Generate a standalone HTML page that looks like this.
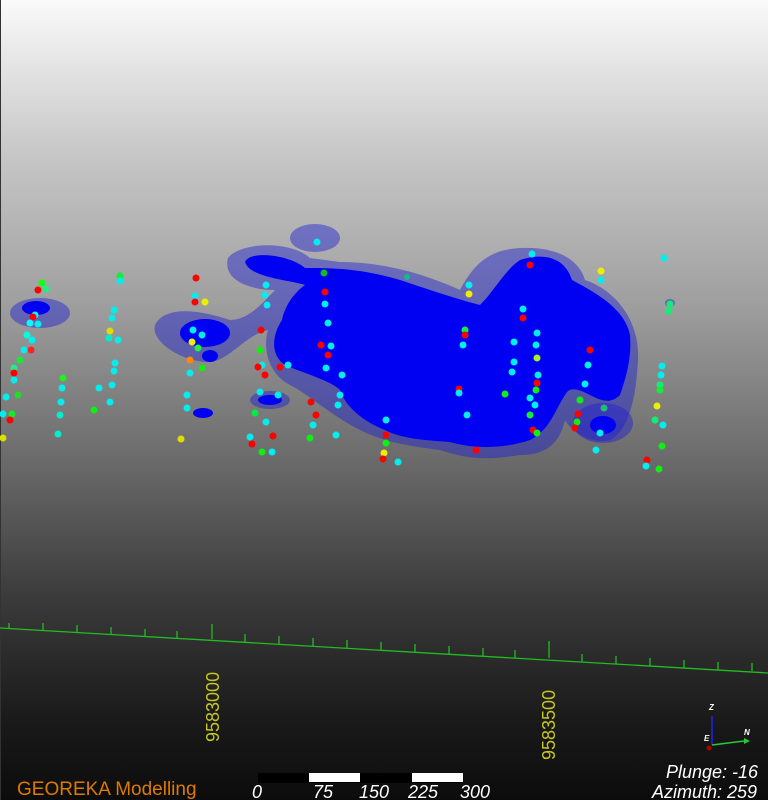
<!DOCTYPE html>
<html><head><meta charset="utf-8"><style>
html,body{margin:0;padding:0;width:768px;height:800px;overflow:hidden}
body{background:linear-gradient(#fafafa 0px,#c8c8c8 150px,#a0a0a0 300px,#6e6e6e 450px,#3a3a3a 600px,#1a1a1a 720px,#0c0c0c 800px);font-family:"Liberation Sans",sans-serif}
svg{position:absolute;left:0;top:0}
</style></head><body>
<svg width="768" height="800" viewBox="0 0 768 800">
<rect x="0" y="0" width="1" height="800" fill="#333"/>
<g fill="rgba(30,30,210,0.45)">
<ellipse cx="315" cy="238" rx="25" ry="14"/>
<path d="M228,258 C240,242 290,240 310,258 L340,262 C380,262 420,272 460,290 C475,262 490,250 520,248 C560,246 580,262 585,280 C615,290 640,320 638,360 C636,395 630,430 610,440 C590,445 570,430 565,420 C560,440 550,455 520,455 C490,460 470,460 440,450 C400,445 380,440 360,430 C330,415 310,395 290,385 C270,375 262,350 268,330 C245,335 230,360 210,362 C180,362 150,340 155,325 C165,305 200,310 230,320 C250,320 265,300 275,290 C250,290 222,280 228,258Z"/>
<ellipse cx="40" cy="313" rx="30" ry="15"/>
<ellipse cx="603" cy="423" rx="30" ry="20"/>
<ellipse cx="270" cy="400" rx="20" ry="9"/>
<ellipse cx="670" cy="303" rx="5" ry="4"/>
</g>
<g fill="#0000f2">
<path d="M245,262 C250,250 290,255 305,268 C330,268 360,268 400,280 C430,290 460,300 480,305 C495,290 505,270 520,260 C545,252 565,258 572,280 C600,295 625,310 630,335 C632,360 625,380 620,395 C610,405 600,400 590,395 C580,390 570,385 565,395 C555,410 550,430 530,440 C500,450 470,448 450,442 C420,440 400,438 385,430 C360,420 345,405 340,390 C330,380 300,372 285,365 C270,355 272,335 282,320 C285,305 295,292 305,285 C290,280 250,278 245,262Z"/>
<ellipse cx="205" cy="333" rx="25" ry="14"/>
<ellipse cx="36" cy="308" rx="14" ry="7"/>
<ellipse cx="603" cy="425" rx="13" ry="9"/>
<ellipse cx="203" cy="413" rx="10" ry="5"/>
<ellipse cx="210" cy="356" rx="8" ry="6"/>
<ellipse cx="270" cy="400" rx="12" ry="5"/>
</g>
<g>
<circle cx="42" cy="283" r="3.5" fill="#1f1"/><circle cx="38" cy="290" r="3.5" fill="#f00"/><circle cx="46" cy="289" r="3.5" fill="#2e8"/>
<circle cx="35" cy="315" r="3.5" fill="#0ff"/><circle cx="33" cy="317" r="3.5" fill="#f00"/><circle cx="30" cy="323" r="3.5" fill="#0ff"/>
<circle cx="38" cy="324" r="3.5" fill="#0ee"/><circle cx="27" cy="335" r="3.5" fill="#0fd"/><circle cx="32" cy="340" r="3.5" fill="#0ee"/>
<circle cx="24" cy="350" r="3.5" fill="#0ee"/><circle cx="31" cy="350" r="3.5" fill="#f22"/><circle cx="20" cy="360" r="3.5" fill="#1e3"/>
<circle cx="14" cy="368" r="3.5" fill="#2e8"/><circle cx="14" cy="373" r="3.5" fill="#f00"/><circle cx="14" cy="380" r="3.5" fill="#0ee"/>
<circle cx="18" cy="395" r="3.5" fill="#2d2"/><circle cx="6" cy="397" r="3.5" fill="#0ee"/><circle cx="3" cy="414" r="3.5" fill="#0ee"/>
<circle cx="12" cy="414" r="3.5" fill="#1e2"/><circle cx="10" cy="420" r="3.5" fill="#f00"/><circle cx="3" cy="438" r="3.5" fill="#dd0"/>
<circle cx="120" cy="276" r="3.5" fill="#1e3"/><circle cx="120" cy="281" r="3.5" fill="#0ee"/><circle cx="114" cy="310" r="3.5" fill="#0ee"/>
<circle cx="112" cy="318" r="3.5" fill="#0ee"/><circle cx="110" cy="331" r="3.5" fill="#dd0"/><circle cx="109" cy="338" r="3.5" fill="#0ec"/>
<circle cx="118" cy="340" r="3.5" fill="#0ee"/><circle cx="115" cy="363" r="3.5" fill="#0ee"/><circle cx="114" cy="371" r="3.5" fill="#0ee"/>
<circle cx="112" cy="385" r="3.5" fill="#0ee"/><circle cx="99" cy="388" r="3.5" fill="#0ee"/><circle cx="110" cy="402" r="3.5" fill="#0ee"/>
<circle cx="94" cy="410" r="3.5" fill="#1e1"/><circle cx="63" cy="378" r="3.5" fill="#2e2"/><circle cx="62" cy="388" r="3.5" fill="#0ee"/>
<circle cx="61" cy="402" r="3.5" fill="#0ee"/><circle cx="60" cy="415" r="3.5" fill="#0ec"/><circle cx="58" cy="434" r="3.5" fill="#0ec"/>
<circle cx="196" cy="278" r="3.5" fill="#f00"/><circle cx="195" cy="296" r="3.5" fill="#0ee"/><circle cx="195" cy="302" r="3.5" fill="#f00"/>
<circle cx="205" cy="302" r="3.5" fill="#ee0"/><circle cx="193" cy="330" r="3.5" fill="#0ee"/><circle cx="192" cy="342" r="3.5" fill="#ee0"/>
<circle cx="198" cy="348" r="3.5" fill="#2e4"/><circle cx="190" cy="360" r="3.5" fill="#f80"/><circle cx="190" cy="373" r="3.5" fill="#0ee"/>
<circle cx="187" cy="395" r="3.5" fill="#0ee"/><circle cx="187" cy="408" r="3.5" fill="#0ee"/><circle cx="181" cy="439" r="3.5" fill="#dd0"/>
<circle cx="202" cy="368" r="3.5" fill="#1e1"/><circle cx="202" cy="335" r="3.5" fill="#0ee"/>
<circle cx="266" cy="285" r="3.5" fill="#0ee"/><circle cx="265" cy="295" r="3.5" fill="#0ee"/><circle cx="267" cy="305" r="3.5" fill="#0ee"/>
<circle cx="261" cy="330" r="3.5" fill="#f00"/><circle cx="260" cy="350" r="3.5" fill="#1e1"/><circle cx="262" cy="365" r="3.5" fill="#0ee"/>
<circle cx="258" cy="367" r="3.5" fill="#f00"/><circle cx="265" cy="375" r="3.5" fill="#f00"/><circle cx="280" cy="367" r="3.5" fill="#f00"/>
<circle cx="260" cy="392" r="3.5" fill="#0ee"/><circle cx="278" cy="395" r="3.5" fill="#0ee"/><circle cx="255" cy="413" r="3.5" fill="#0e4"/>
<circle cx="266" cy="422" r="3.5" fill="#0ee"/><circle cx="250" cy="437" r="3.5" fill="#0ee"/><circle cx="252" cy="444" r="3.5" fill="#f00"/>
<circle cx="273" cy="436" r="3.5" fill="#f00"/><circle cx="262" cy="452" r="3.5" fill="#1e1"/><circle cx="272" cy="452" r="3.5" fill="#0ee"/>
<circle cx="288" cy="365" r="3.5" fill="#0ee"/><circle cx="311" cy="402" r="3.5" fill="#f00"/><circle cx="316" cy="415" r="3.5" fill="#f00"/>
<circle cx="313" cy="425" r="3.5" fill="#0ee"/><circle cx="310" cy="438" r="3.5" fill="#1e1"/><circle cx="336" cy="435" r="3.5" fill="#0ee"/>
<circle cx="317" cy="242" r="3.5" fill="#0ee"/><circle cx="324" cy="273" r="3.5" fill="#1b2"/><circle cx="325" cy="292" r="3.5" fill="#f00"/>
<circle cx="325" cy="304" r="3.5" fill="#0ee"/><circle cx="328" cy="323" r="3.5" fill="#0ee"/><circle cx="321" cy="345" r="3.5" fill="#f00"/>
<circle cx="328" cy="355" r="3.5" fill="#f00"/><circle cx="326" cy="368" r="3.5" fill="#0ee"/><circle cx="342" cy="375" r="3.5" fill="#0ee"/>
<circle cx="340" cy="395" r="3.5" fill="#0ee"/><circle cx="338" cy="405" r="3.5" fill="#0ee"/><circle cx="331" cy="346" r="3.5" fill="#0ee"/>
<circle cx="386" cy="420" r="3.5" fill="#0ee"/><circle cx="386" cy="435" r="3.5" fill="#f00"/><circle cx="386" cy="443" r="3.5" fill="#1e1"/>
<circle cx="384" cy="453" r="3.5" fill="#ee0"/><circle cx="383" cy="459" r="3.5" fill="#f00"/><circle cx="398" cy="462" r="3.5" fill="#0ee"/>
<circle cx="407" cy="277" r="3" fill="#1b8"/><circle cx="469" cy="285" r="3.5" fill="#0ee"/><circle cx="469" cy="294" r="3.5" fill="#ee0"/>
<circle cx="465" cy="330" r="3.5" fill="#1e4"/><circle cx="465" cy="335" r="3.5" fill="#f00"/><circle cx="463" cy="345" r="3.5" fill="#0ee"/>
<circle cx="459" cy="389" r="3.5" fill="#f00"/><circle cx="459" cy="393" r="3.5" fill="#0ee"/><circle cx="467" cy="415" r="3.5" fill="#0ee"/>
<circle cx="476" cy="450" r="3.5" fill="#f00"/><circle cx="505" cy="394" r="3.5" fill="#1e1"/>
<circle cx="532" cy="254" r="3.5" fill="#0ee"/><circle cx="530" cy="265" r="3.5" fill="#f00"/><circle cx="523" cy="309" r="3.5" fill="#0ee"/>
<circle cx="523" cy="318" r="3.5" fill="#f00"/><circle cx="537" cy="333" r="3.5" fill="#0ee"/><circle cx="536" cy="345" r="3.5" fill="#0ee"/>
<circle cx="537" cy="358" r="3.5" fill="#ae2"/><circle cx="514" cy="342" r="3.5" fill="#0ee"/><circle cx="514" cy="362" r="3.5" fill="#0ee"/>
<circle cx="512" cy="372" r="3.5" fill="#0ee"/><circle cx="538" cy="375" r="3.5" fill="#0ee"/><circle cx="537" cy="383" r="3.5" fill="#f00"/>
<circle cx="536" cy="390" r="3.5" fill="#1e1"/><circle cx="530" cy="398" r="3.5" fill="#0ee"/><circle cx="535" cy="405" r="3.5" fill="#0ee"/>
<circle cx="530" cy="415" r="3.5" fill="#1e3"/><circle cx="533" cy="430" r="3.5" fill="#f00"/><circle cx="537" cy="433" r="3.5" fill="#1e1"/>
<circle cx="601" cy="271" r="3.5" fill="#ee0"/><circle cx="601" cy="280" r="3.5" fill="#0ee"/><circle cx="590" cy="350" r="3.5" fill="#f00"/>
<circle cx="588" cy="365" r="3.5" fill="#0ee"/><circle cx="585" cy="384" r="3.5" fill="#0ee"/><circle cx="580" cy="400" r="3.5" fill="#1e1"/>
<circle cx="578" cy="414" r="3.5" fill="#f00"/><circle cx="577" cy="422" r="3.5" fill="#1e1"/><circle cx="575" cy="428" r="3.5" fill="#f00"/>
<circle cx="600" cy="433" r="3.5" fill="#0ee"/><circle cx="596" cy="450" r="3.5" fill="#0ee"/><circle cx="604" cy="408" r="3.5" fill="#2b7"/>
<circle cx="664" cy="258" r="3.5" fill="#0ee"/><circle cx="670" cy="304" r="3.5" fill="#1e7"/><circle cx="669" cy="311" r="3.5" fill="#1e7"/>
<circle cx="662" cy="366" r="3.5" fill="#0ee"/><circle cx="661" cy="375" r="3.5" fill="#0ee"/><circle cx="660" cy="385" r="3.5" fill="#1e7"/>
<circle cx="660" cy="390" r="3.5" fill="#1e3"/><circle cx="657" cy="406" r="3.5" fill="#ee0"/><circle cx="655" cy="420" r="3.5" fill="#1e7"/>
<circle cx="663" cy="425" r="3.5" fill="#0ee"/><circle cx="662" cy="446" r="3.5" fill="#1e1"/><circle cx="647" cy="460" r="3.5" fill="#f00"/>
<circle cx="646" cy="466" r="3.5" fill="#0ee"/><circle cx="659" cy="469" r="3.5" fill="#1e1"/>
</g>
<g stroke="#22bb22" stroke-width="1.3" fill="none">
<line x1="0" y1="628" x2="768" y2="673"/>
<path d="M9,623v6 M43,623v8 M77,625v8 M111,627v8 M145,629v8 M177,631v8 M212,624v15 M245,634v8 M279,636v8 M313,638v8 M347,640v8 M381,642v8 M415,644v8 M449,646v8 M483,648v8 M515,650v8 M549,641v17 M582,654v8 M616,656v8 M650,658v8 M684,660v8 M718,662v8 M752,663v8"/>
</g>
<g fill="#c8c81e" font-size="18" font-family="Liberation Sans,sans-serif">
<text transform="translate(219,742) rotate(-90)">9583000</text>
<text transform="translate(555,760) rotate(-90)">9583500</text>
</g>
<g>
<line x1="712" y1="745" x2="712" y2="716" stroke="#2222ee" stroke-width="1.5"/>
<line x1="712" y1="745" x2="744" y2="741" stroke="#22cc33" stroke-width="1.5"/>
<path d="M744,738 l6,3 l-6,3z" fill="#22cc33"/>
<circle cx="709" cy="748" r="2.5" fill="#a00"/>
<text x="709" y="710" fill="#fff" font-size="8" font-style="italic" font-weight="bold">Z</text>
<text x="744" y="735" fill="#fff" font-size="8" font-style="italic" font-weight="bold">N</text>
<text x="704" y="741" fill="#fff" font-size="8" font-style="italic" font-weight="bold">E</text>
</g>
<rect x="258" y="773" width="205" height="10" fill="#000"/>
<rect x="309" y="773" width="51" height="9" fill="#fff"/>
<rect x="412" y="773" width="51" height="9" fill="#fff"/>
<g fill="#fff" font-size="18" font-style="italic">
<text x="252" y="798">0</text><text x="313" y="798">75</text><text x="359" y="798">150</text><text x="408" y="798">225</text><text x="460" y="798">300</text>
<text x="666" y="778">Plunge: -16</text>
<text x="652" y="798">Azimuth: 259</text>
</g>
<text x="17" y="795" fill="#dd7a00" font-size="19">GEOREKA Modelling</text>
</svg>
</body></html>
